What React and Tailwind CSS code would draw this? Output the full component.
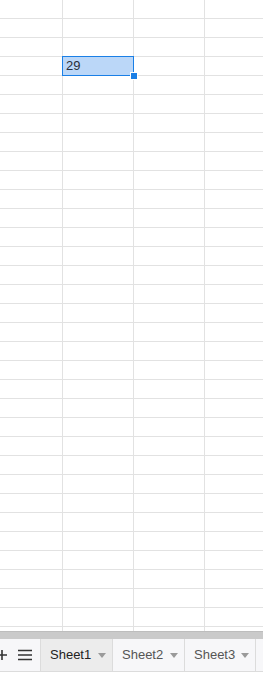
import React from 'react'

const rows = Array.from({ length: 34 })
const cols = ['w-[63px]', 'w-[71px]', 'w-[71px]', 'flex-1']
const sheets = ['Sheet1', 'Sheet2', 'Sheet3']

export default function App() {
  return (
    <div className="flex h-[688px] w-[263px] flex-col overflow-hidden bg-white font-['Liberation_Sans',Arial,sans-serif]">
      {/* grid */}
      <div className="relative h-[631px] overflow-hidden">
        {rows.map((_, r) => (
          <div key={r} className="flex h-[19px] border-b border-[#e2e2e2]">
            {cols.map((w, c) => (
              <div key={c} className={`${w} h-full ${c < 3 ? 'border-r border-[#e2e2e2]' : ''}`} />
            ))}
          </div>
        ))}
        {/* selected cell */}
        <div className="absolute left-[62px] top-[56px] flex h-[20px] w-[72px] items-center border border-[#1a7fe6] bg-[#bbd7f8] pl-[3px] text-[13px] text-[#2a2f3a]">
          29
        </div>
        <div className="absolute left-[130px] top-[72px] h-[8px] w-[8px] border border-white bg-[#1a7fe6]" />
      </div>

      {/* scrollbar strip */}
      <div className="h-[8px] border-t border-[#bdbdbd] bg-[#cacaca]" />

      {/* sheet tabs */}
      <div className="flex h-[33px] items-stretch border-b border-[#dcdcdc] bg-[#f7f7f9]">
        <div className="flex w-[40px] items-center text-[#333]">
          <svg width="10" height="12" viewBox="0 0 10 12" className="ml-[-3px]">
            <path d="M5 1v10M0 6h10" stroke="#333" strokeWidth="1.6" />
          </svg>
          <svg width="14" height="12" viewBox="0 0 14 12" className="ml-[11px]">
            <path d="M0 1.5h14M0 6h14M0 10.5h14" stroke="#333" strokeWidth="1.6" />
          </svg>
        </div>
        {sheets.map((s, i) => (
          <div
            key={s}
            className={`flex w-[72px] items-center justify-between border-l border-[#dcdcdc] pl-[9px] pr-[6px] text-[13px] ${
              i === 0 ? 'bg-[#ececec] text-[#222]' : 'text-[#555]'
            } ${i === 2 ? 'border-r' : ''}`}
          >
            <span>{s}</span>
            <svg width="8" height="5" viewBox="0 0 8 5">
              <path d="M0 0h8L4 5z" fill="#9a9a9a" />
            </svg>
          </div>
        ))}
      </div>
    </div>
  )
}
